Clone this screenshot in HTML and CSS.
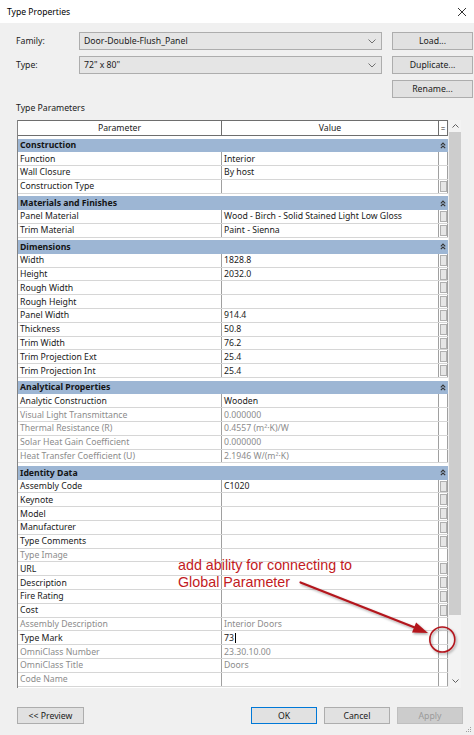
FILE: index.html
```html
<!DOCTYPE html>
<html>
<head>
<meta charset="utf-8">
<link rel="stylesheet" href="styles.css">
</head>
<body>
<div class="titlebar">
  <span class="title">Type Properties</span>
  <svg class="close" width="10" height="10" viewBox="0 0 10 10"><path d="M1 1 L9 9 M9 1 L1 9" stroke="#333" stroke-width="1" fill="none"/></svg>
</div>
<div class="content">
  <div class="top">
    <div class="label">Family:</div>
    <div class="combo"><span>Door-Double-Flush_Panel</span><svg width="8" height="5" viewBox="0 0 8 5"><path d="M0.5 0.5 L4 4 L7.5 0.5" stroke="#707070" stroke-width="1" fill="none"/></svg></div>
    <div class="btn">Load...</div>
    <div class="label">Type:</div>
    <div class="combo"><span>72" x 80"</span><svg width="8" height="5" viewBox="0 0 8 5"><path d="M0.5 0.5 L4 4 L7.5 0.5" stroke="#707070" stroke-width="1" fill="none"/></svg></div>
    <div class="btn">Duplicate...</div>
    <div class="btn rename">Rename...</div>
  </div>
  <div class="section">Type Parameters</div>
  <div class="gridwrap">
    <div class="grid">
      <div class="hrow"><div class="hp">Parameter</div><div class="hv">Value</div><div class="he">=</div></div>

      <div class="grp"><span>Construction</span><svg class="dc" width="6" height="7" viewBox="0 0 6 7"><path d="M0.8 3.3 L3 1.1 L5.2 3.3 M0.8 6.2 L3 4 L5.2 6.2" stroke="#333" stroke-width="1.1" fill="none"/></svg></div>
      <div class="row"><div class="p">Function</div><div class="v">Interior</div><div class="c"></div></div>
      <div class="row"><div class="p">Wall Closure</div><div class="v">By host</div><div class="c"></div></div>
      <div class="row"><div class="p">Construction Type</div><div class="v"></div><div class="c"><i class="chk"></i></div></div>

      <div class="grp"><span>Materials and Finishes</span><svg class="dc" width="6" height="7" viewBox="0 0 6 7"><path d="M0.8 3.3 L3 1.1 L5.2 3.3 M0.8 6.2 L3 4 L5.2 6.2" stroke="#333" stroke-width="1.1" fill="none"/></svg></div>
      <div class="row"><div class="p">Panel Material</div><div class="v">Wood - Birch - Solid Stained Light Low Gloss</div><div class="c"><i class="chk"></i></div></div>
      <div class="row"><div class="p">Trim Material</div><div class="v">Paint - Sienna</div><div class="c"><i class="chk"></i></div></div>

      <div class="grp"><span>Dimensions</span><svg class="dc" width="6" height="7" viewBox="0 0 6 7"><path d="M0.8 3.3 L3 1.1 L5.2 3.3 M0.8 6.2 L3 4 L5.2 6.2" stroke="#333" stroke-width="1.1" fill="none"/></svg></div>
      <div class="row"><div class="p">Width</div><div class="v">1828.8</div><div class="c"><i class="chk"></i></div></div>
      <div class="row"><div class="p">Height</div><div class="v">2032.0</div><div class="c"><i class="chk"></i></div></div>
      <div class="row"><div class="p">Rough Width</div><div class="v"></div><div class="c"><i class="chk"></i></div></div>
      <div class="row"><div class="p">Rough Height</div><div class="v"></div><div class="c"><i class="chk"></i></div></div>
      <div class="row"><div class="p">Panel Width</div><div class="v">914.4</div><div class="c"><i class="chk"></i></div></div>
      <div class="row"><div class="p">Thickness</div><div class="v">50.8</div><div class="c"><i class="chk"></i></div></div>
      <div class="row"><div class="p">Trim Width</div><div class="v">76.2</div><div class="c"><i class="chk"></i></div></div>
      <div class="row"><div class="p">Trim Projection Ext</div><div class="v">25.4</div><div class="c"><i class="chk"></i></div></div>
      <div class="row"><div class="p">Trim Projection Int</div><div class="v">25.4</div><div class="c"><i class="chk"></i></div></div>

      <div class="grp"><span>Analytical Properties</span><svg class="dc" width="6" height="7" viewBox="0 0 6 7"><path d="M0.8 3.3 L3 1.1 L5.2 3.3 M0.8 6.2 L3 4 L5.2 6.2" stroke="#333" stroke-width="1.1" fill="none"/></svg></div>
      <div class="row"><div class="p">Analytic Construction</div><div class="v">Wooden</div><div class="c"></div></div>
      <div class="row dim"><div class="p">Visual Light Transmittance</div><div class="v">0.000000</div><div class="c"></div></div>
      <div class="row dim"><div class="p">Thermal Resistance (R)</div><div class="v">0.4557 (m²·K)/W</div><div class="c"></div></div>
      <div class="row dim"><div class="p">Solar Heat Gain Coefficient</div><div class="v">0.000000</div><div class="c"></div></div>
      <div class="row dim"><div class="p">Heat Transfer Coefficient (U)</div><div class="v">2.1946 W/(m²·K)</div><div class="c"></div></div>

      <div class="grp"><span>Identity Data</span><svg class="dc" width="6" height="7" viewBox="0 0 6 7"><path d="M0.8 3.3 L3 1.1 L5.2 3.3 M0.8 6.2 L3 4 L5.2 6.2" stroke="#333" stroke-width="1.1" fill="none"/></svg></div>
      <div class="row"><div class="p">Assembly Code</div><div class="v">C1020</div><div class="c"><i class="chk"></i></div></div>
      <div class="row"><div class="p">Keynote</div><div class="v"></div><div class="c"><i class="chk"></i></div></div>
      <div class="row"><div class="p">Model</div><div class="v"></div><div class="c"><i class="chk"></i></div></div>
      <div class="row"><div class="p">Manufacturer</div><div class="v"></div><div class="c"><i class="chk"></i></div></div>
      <div class="row"><div class="p">Type Comments</div><div class="v"></div><div class="c"><i class="chk"></i></div></div>
      <div class="row dim"><div class="p">Type Image</div><div class="v"></div><div class="c"></div></div>
      <div class="row"><div class="p">URL</div><div class="v"></div><div class="c"><i class="chk"></i></div></div>
      <div class="row"><div class="p">Description</div><div class="v"></div><div class="c"><i class="chk"></i></div></div>
      <div class="row"><div class="p">Fire Rating</div><div class="v"></div><div class="c"><i class="chk"></i></div></div>
      <div class="row"><div class="p">Cost</div><div class="v"></div><div class="c"><i class="chk"></i></div></div>
      <div class="row dim"><div class="p">Assembly Description</div><div class="v">Interior Doors</div><div class="c"></div></div>
      <div class="row"><div class="p">Type Mark</div><div class="v">73<span class="caret"></span></div><div class="c"></div></div>
      <div class="row dim"><div class="p">OmniClass Number</div><div class="v">23.30.10.00</div><div class="c"></div></div>
      <div class="row dim"><div class="p">OmniClass Title</div><div class="v">Doors</div><div class="c"></div></div>
      <div class="row dim"><div class="p">Code Name</div><div class="v"></div><div class="c"></div></div>
    </div>
    <div class="sb">
      <div class="sb-up"><svg width="7" height="4" viewBox="0 0 7 4"><path d="M0.5 3.5 L3.5 0.5 L6.5 3.5" stroke="#606060" stroke-width="1" fill="none"/></svg></div>
      <div class="thumb"></div>
      <div class="track"></div>
      <div class="sb-down"><svg width="7" height="4" viewBox="0 0 7 4"><path d="M0.5 0.5 L3.5 3.5 L6.5 0.5" stroke="#606060" stroke-width="1" fill="none"/></svg></div>
    </div>
  </div>
  <div class="footer">
    <div class="btn preview">&lt;&lt; Preview</div>
    <div class="spacer"></div>
    <div class="btn fbtn ok">OK</div>
    <div class="btn fbtn">Cancel</div>
    <div class="btn fbtn apply">Apply</div>
  </div>
</div>
<svg class="grip" width="6" height="6" viewBox="0 0 6 6"><rect x="4" y="0" width="1" height="1" fill="#a0a0a0"/><rect x="2" y="2" width="1" height="1" fill="#a0a0a0"/><rect x="4" y="2" width="1" height="1" fill="#a0a0a0"/><rect x="0" y="4" width="1" height="1" fill="#a0a0a0"/><rect x="2" y="4" width="1" height="1" fill="#a0a0a0"/><rect x="4" y="4" width="1" height="1" fill="#a0a0a0"/></svg>
<div class="annot">add ability for connecting to<br>Global Parameter</div>
<svg class="overlay" width="474" height="735" viewBox="0 0 474 735">
  <defs>
    <filter id="sh" x="-20%" y="-20%" width="140%" height="140%">
      <feDropShadow dx="1.2" dy="1.5" stdDeviation="1" flood-color="#000" flood-opacity="0.35"/>
    </filter>
  </defs>
  <g filter="url(#sh)">
    <path d="M300.5 582.5 L416 628" stroke="#b3151d" stroke-width="2.2" fill="none" stroke-linecap="round"/>
    <polygon points="428,633 416.1,622.4 412,632.6" fill="#b3151d"/>
    <circle cx="442.3" cy="639.5" r="12.5" stroke="#b3151d" stroke-width="1.6" fill="none"/>
  </g>
</svg>
</body>
</html>
```
FILE: styles.css
```css
* { box-sizing: border-box; }
html, body { margin: 0; padding: 0; }
body {
  width: 474px;
  height: 735px;
  background: #f0f0f0;
  font-family: "Noto Sans", "Liberation Sans", sans-serif;
  font-size: 8.7px;
  color: #1a1a1a;
  position: relative;
  overflow: hidden;
}
.titlebar {
  height: 23px;
  background: #ffffff;
  display: flex;
  align-items: center;
  justify-content: space-between;
  padding: 0 7px 0 7px;
}
.title { font-size: 8.6px; color: #000; }
.close { display: block; margin-top: 1px; }
.content { padding: 9px 11px 0 16px; }
.top {
  display: grid;
  grid-template-columns: 53px 303px 81px;
  column-gap: 10px;
  row-gap: 6px;
  grid-auto-rows: 18px;
}
.label { display: flex; align-items: center; }
.combo {
  background: #e5e5e5;
  border: 1px solid #adadad;
  display: flex;
  align-items: center;
  justify-content: space-between;
  padding: 0 5px 0 4px;
}
.combo svg { display: block; }
.btn {
  background: #e1e1e1;
  border: 1px solid #adadad;
  display: flex;
  align-items: center;
  justify-content: center;
  white-space: nowrap;
}
.rename { grid-column: 3; }
.section { margin-top: 4px; height: 13px; line-height: 13px; margin-bottom: 5px; }
.gridwrap { display: flex; gap: 1px; margin-left: 1px; height: 568px; }
.grid {
  width: 431px;
  height: 568px;
  border-left: 1px solid #828282;
  background: #ffffff;
  overflow: hidden;
}
.hrow {
  display: flex;
  height: 16px;
  border-top: 1px solid #6e6e6e;
  border-bottom: 1px solid #6e6e6e;
}
.hp, .hv, .he {
  display: flex;
  align-items: center;
  justify-content: center;
  border-right: 1px solid #6e6e6e;
}
.hp { width: 204px; }
.hv { width: 217px; }
.he { width: 9px; font-size: 8px; }
.grp {
  height: 13.8px;
  margin-top: 2.5px;
  width: 430px;
  background: #9db6d4;
  font-weight: bold;
  color: #141414;
  display: flex;
  align-items: center;
  justify-content: space-between;
  padding: 0 2px 0 2px;
}
.dc { display: block; }
.row {
  display: flex;
  height: 13.8px;
  border-bottom: 1px solid #d6d6d6;
}
.p, .v, .c {
  border-right: 1px solid #a0a0a0;
  display: flex;
  align-items: center;
  white-space: nowrap;
  overflow: hidden;
}
.p { width: 204px; padding-left: 2px; }
.v { width: 217px; padding-left: 2px; }
.c { width: 9px; justify-content: center; }
.chk {
  display: block;
  width: 7px;
  height: 11px;
  background: #e6e6e6;
  border: 1px solid #b0b0b0;
}
.dim { color: #8c8c8c; }
.caret {
  display: inline-block;
  width: 1px;
  height: 10px;
  background: #000;
  margin-left: 1px;
}
.sb {
  width: 12px;
  height: 568px;
  background: #f3f3f3;
  display: flex;
  flex-direction: column;
}
.sb-up { height: 12px; display: flex; align-items: center; justify-content: center; }
.sb-up svg, .sb-down svg { display: block; }
.thumb { height: 483px; background: #cdcdcd; }
.track { flex: 1; }
.sb-down { height: 14px; display: flex; align-items: center; justify-content: center; }
.footer { display: flex; gap: 7px; margin-top: 19px; height: 17px; }
.preview { width: 67px; margin-left: 1px; }
.spacer { flex: 1; }
.fbtn { width: 66px; }
.ok { border-color: #0078d7; }
.apply { background: #cccccc; border-color: #bfbfbf; color: #9a9a9a; }
.grip { position: absolute; right: 2px; bottom: 2px; }
.annot {
  position: absolute;
  left: 178px;
  top: 557px;
  font-family: "Liberation Sans", Arial, sans-serif;
  font-size: 14.3px;
  line-height: 16.7px;
  color: #c21a22;
  white-space: nowrap;
}
.overlay { position: absolute; left: 0; top: 0; pointer-events: none; }
```
